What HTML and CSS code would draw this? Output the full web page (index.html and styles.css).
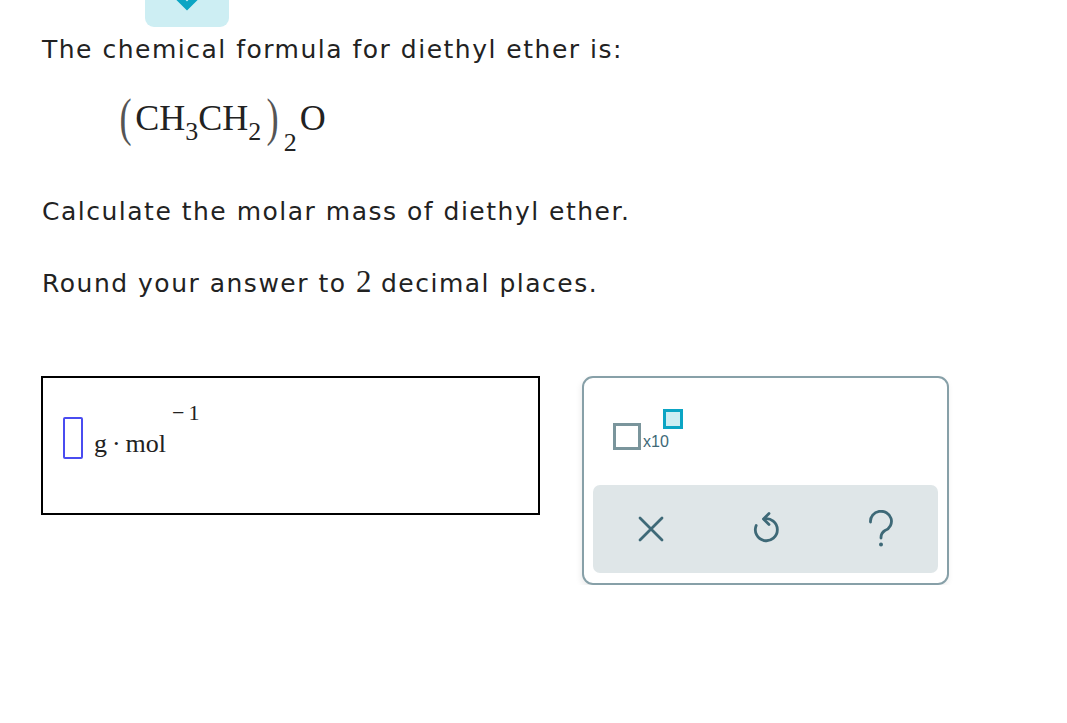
FILE: index.html
```html
<!DOCTYPE html>
<html>
<head>
<meta charset="utf-8">
<link rel="stylesheet" href="styles.css">
</head>
<body>
<div class="page">
  <div class="tab">
    <svg width="40" height="20" viewBox="0 0 40 20"><path d="M6 -8 L20 6 L34 -8" fill="none" stroke="#0ba5c4" stroke-width="6.5" stroke-linejoin="miter"/></svg>
  </div>
  <p class="q first">The chemical formula for diethyl ether is:</p>
  <div class="formula">
    <span class="paren">(</span>CH<sub>3</sub>CH<sub>2</sub><span class="paren r">)</span><sub class="outer">2</sub>O
  </div>
  <p class="q second">Calculate the molar mass of diethyl ether.</p>
  <p class="q third">Round your answer to <span class="serif">2</span> decimal places.</p>
  <div class="work">
    <div class="answer">
      <span class="cursor"></span>
      <span class="unit">g<span class="dot">•</span>mol<sup><span class="minus">−</span>1</sup></span>
    </div>
    <div class="panel">
      <div class="tools">
        <div class="sci">
          <span class="box big"></span><span class="x10">x10</span><span class="box small"></span>
        </div>
      </div>
      <div class="actions">
        <svg width="28" height="28" viewBox="0 0 28 28"><path d="M3 3 L25 25 M25 3 L3 25" stroke="#3e6977" stroke-width="2.8" stroke-linecap="round" fill="none"/></svg>
        <svg width="28" height="36" viewBox="0 0 28 36"><path d="M12 8 A11 11 0 1 1 4.2 14.5" stroke="#3e6977" stroke-width="2.8" fill="none" stroke-linecap="round"/><path d="M17 2.5 L11.5 8 L17 13.5" stroke="#3e6977" stroke-width="2.8" fill="none" stroke-linecap="round" stroke-linejoin="round"/></svg>
        <svg width="28" height="38" viewBox="0 0 28 38"><path d="M3.5 12 A10.5 10 0 1 1 18 20.5 Q14 23 14 27.5 L14 28" stroke="#3e6977" stroke-width="2.8" fill="none" stroke-linecap="round"/><circle cx="14" cy="34.5" r="2" fill="#3e6977"/></svg>
      </div>
    </div>
  </div>
</div>
</body>
</html>
```
FILE: styles.css
```css
html, body { margin: 0; padding: 0; background: #fff; }
.page { padding: 0 0 0 42px; width: 1025px; font-family: "DejaVu Sans", Verdana, sans-serif; color: #222; }
.tab { margin-left: 103px; width: 84px; height: 27px; background: #cdeef3; border-radius: 0 0 9px 9px; display: flex; justify-content: center; }
.tab svg { display: block; }
.q { margin: 0; font-size: 25px; line-height: 30px; letter-spacing: 1.5px; }
.q.first { margin-top: 8px; }
.q.second { margin-top: 31px; }
.q.third { margin-top: 40px; }
.formula { font-family: "Liberation Serif", "Times New Roman", serif; font-size: 36px; margin: 31px 0 0 75px; height: 70px; line-height: 44px; color: #222; white-space: nowrap; }
.formula sub { font-size: 26px; vertical-align: -10px; line-height: 0; }
.formula sub.outer { vertical-align: -21px; margin-left: 2px; margin-right: 3px; }
.paren { font-size: 52px; line-height: 0; color: #555; display: inline-block; transform: scaleX(0.7); vertical-align: -5px; margin-right: 1px; }
.paren.r { margin: 0 0 0 3px; }
.serif { font-family: "Liberation Serif", serif; font-size: 31px; letter-spacing: 0; }
.work { display: flex; margin-top: 77px; margin-left: -1px; gap: 42px; align-items: flex-start; }
.answer { width: 499px; height: 139px; border: 2px solid #000; display: flex; align-items: flex-start; padding: 39px 0 0 20px; box-sizing: border-box; }
.cursor { width: 20px; height: 42px; border: 2.5px solid #4a4cf0; border-radius: 2px; box-sizing: border-box; }
.unit { font-family: "Liberation Serif", serif; font-size: 26px; line-height: 30px; color: #222; margin-left: 11px; margin-top: 12px; white-space: nowrap; }
.dot { margin: 0 7px; font-size: 13px; position: relative; top: -4px; }
.unit sup { font-size: 22px; position: relative; top: -32px; margin-left: 6px; line-height: 0; vertical-align: baseline; }
.minus { margin-right: 4px; }
.panel { width: 367px; height: 209px; border: 2px solid #87a0a8; border-radius: 11px; box-sizing: border-box; padding: 0 9px 10px 9px; display: flex; flex-direction: column; box-shadow: -1px 3px 6px rgba(0,0,0,0.08); }
.tools { height: 107px; }
.sci { display: flex; align-items: flex-end; margin: 32px 0 0 20px; height: 40px; font-family: "Liberation Sans", Arial, sans-serif; }
.box { display: block; box-sizing: border-box; }
.box.big { width: 28px; height: 27px; border: 3px solid #7a959c; background: #fff; }
.x10 { font-size: 16px; color: #3e6977; margin-left: 2px; line-height: 16px; margin-bottom: 0; }
.box.small { width: 20px; height: 20px; border: 3px solid #0ba5c4; background: #cdeef3; align-self: flex-start; margin-left: -6px; margin-top: -1px; }
.actions { flex: 1; background: #dfe6e8; border-radius: 7px; display: flex; justify-content: center; gap: 87px; align-items: center; }
```
